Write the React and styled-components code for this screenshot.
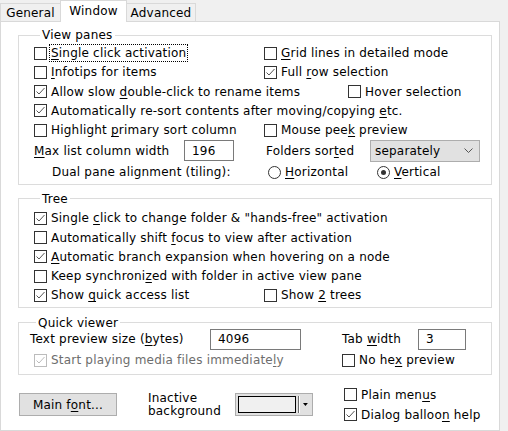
import React from "react";
import styled, { createGlobalStyle } from "styled-components";

const GlobalStyle = createGlobalStyle`
  html, body {
    margin: 0;
    padding: 0;
    background: #f0f0f0;
  }
  body {
    font-family: "DejaVu Sans", "Liberation Sans", sans-serif;
    font-size: 12px;
    line-height: 14px;
    letter-spacing: 0.2px;
    color: #000;
  }
  u {
    text-decoration-thickness: 1px;
    text-underline-offset: 2px;
  }
`;

const Dialog = styled.div`
  width: 508px;
  height: 431px;
  overflow: hidden;
`;

const TabStrip = styled.div`
  display: flex;
  align-items: flex-end;
  height: 22px;
  margin-bottom: -1px;
  position: relative;
  z-index: 1;
`;

const Tab = styled.div`
  box-sizing: border-box;
  width: ${(p) => p.$w}px;
  height: ${(p) => (p.$active ? 22 : 18)}px;
  margin-bottom: ${(p) => (p.$active ? 0 : 1)}px;
  margin-left: ${(p) => (p.$first ? 0 : -1)}px;
  padding-top: ${(p) => (p.$active ? 3 : 2)}px;
  border: 1px solid #d9d9d9;
  border-bottom: none;
  background: ${(p) => (p.$active ? "#fff" : "#f0f0f0")};
  text-align: center;
`;

const Panel = styled.div`
  box-sizing: border-box;
  width: 500px;
  height: 410px;
  border: 1px solid #d9d9d9;
  background: #fff;
  padding: 6px 7px 0 17px;
  display: flex;
  flex-direction: column;
`;

const Group = styled.fieldset`
  margin: ${(p) => p.$mt || 0}px 0 0;
  padding: ${(p) => p.$pt || 0}px 0 ${(p) => p.$pb || 0}px ${(p) => p.$pl || 15}px;
  border: 1px solid #dcdcdc;
  min-inline-size: 0;
`;

const Legend = styled.legend`
  margin-left: 6px;
  padding: 0 2px;
  line-height: 14px;
`;

const Row = styled.div`
  display: grid;
  grid-template-columns: ${(p) => p.$cols || "1fr"};
  align-items: center;
  height: ${(p) => p.$h || 19.25}px;
  margin-top: ${(p) => p.$mt || 0}px;
  padding-left: ${(p) => p.$indent || 0}px;
`;

const CheckLabel = styled.label`
  display: flex;
  align-items: center;
  white-space: nowrap;
  color: ${(p) => (p.$disabled ? "#6d6d6d" : "#000")};
`;

const Box = styled.span`
  box-sizing: border-box;
  flex: 0 0 13px;
  width: 13px;
  height: 13px;
  margin-right: 4px;
  border: 1px solid ${(p) => (p.$disabled ? "#bcbcbc" : "#333")};
  background: #fff;
  display: flex;
  align-items: center;
  justify-content: center;
`;

const Round = styled(Box)`
  border-radius: 50%;
`;

const Dot = styled.span`
  width: 5px;
  height: 5px;
  border-radius: 50%;
  background: #333;
`;

const Caption = styled.span`
  outline: ${(p) => (p.$focus ? "1px dotted #000" : "none")};
  outline-offset: 1px;
`;

const Text = styled.span`
  white-space: nowrap;
`;

const TextBox = styled.div`
  box-sizing: border-box;
  width: ${(p) => p.$w}px;
  height: 21px;
  border: 1px solid #7a7a7a;
  background: #fff;
  padding: 0 0 0 7px;
  display: flex;
  align-items: center;
`;

const Select = styled.div`
  box-sizing: border-box;
  width: 110px;
  height: 22px;
  border: 1px solid #adadad;
  background: #e1e1e1;
  padding: 0 6px 0 4px;
  display: flex;
  align-items: center;
  justify-content: space-between;
`;

const Bottom = styled.div`
  display: flex;
  align-items: center;
  height: 40px;
  margin-top: 10px;
  padding-left: 1px;
`;

const Button = styled.div`
  box-sizing: border-box;
  width: 98px;
  height: 23px;
  border: 1px solid #adadad;
  background: #e1e1e1;
  display: flex;
  align-items: center;
  justify-content: center;
`;

const TwoLine = styled.div`
  width: 87px;
  margin-left: 31px;
  line-height: 13px;
`;

const ColorCombo = styled.div`
  box-sizing: border-box;
  width: 78px;
  height: 23px;
  border: 1px solid #adadad;
  background: #e1e1e1;
  display: flex;
  align-items: center;
  padding: 0 4px 0 2px;
`;

const Swatch = styled.div`
  box-sizing: border-box;
  width: 60px;
  height: 17px;
  border: 1px solid #000;
  background: #f0f0f0;
`;

const Splitter = styled.div`
  width: 1px;
  height: 17px;
  margin: 0 4px 0 2px;
  background: #6d6d6d;
  box-shadow: 1px 0 0 #fff;
`;

const CheckColumn = styled.div`
  margin-left: 31px;
  display: flex;
  flex-direction: column;
`;

const Tick = ({ color }) => (
  <svg width="11" height="11" viewBox="0 0 11 11">
    <path d="M1.5 5.5 L4 8 L9.5 2" fill="none" stroke={color} strokeWidth="1" />
  </svg>
);

const Check = ({ checked, disabled, focus, children }) => (
  <CheckLabel $disabled={disabled}>
    <Box $disabled={disabled}>
      {checked && <Tick color={disabled ? "#bcbcbc" : "#555"} />}
    </Box>
    <Caption $focus={focus}>{children}</Caption>
  </CheckLabel>
);

const Radio = ({ checked, children }) => (
  <CheckLabel>
    <Round>{checked && <Dot />}</Round>
    <span>{children}</span>
  </CheckLabel>
);

const Chevron = () => (
  <svg width="9" height="6" viewBox="0 0 9 6">
    <path d="M0.5 0.5 L4.5 4.5 L8.5 0.5" fill="none" stroke="#555" strokeWidth="1" />
  </svg>
);

const Arrow = () => (
  <svg width="5" height="3" viewBox="0 0 5 3">
    <path d="M0 0 H5 L2.5 3 Z" fill="#000" />
  </svg>
);

export default function App() {
  return (
    <Dialog>
      <GlobalStyle />
      <TabStrip>
        <Tab $first $w={61}>General</Tab>
        <Tab $active $w={67}>Window</Tab>
        <Tab $w={70}>Advanced</Tab>
      </TabStrip>
      <Panel>
        <Group $pt={1.5}>
          <Legend>View panes</Legend>
          <Row $cols="230px 1fr">
            <Check focus><u>S</u>ingle click activation</Check>
            <Check><u>G</u>rid lines in detailed mode</Check>
          </Row>
          <Row $cols="230px 1fr">
            <Check><u>I</u>nfotips for items</Check>
            <Check checked>Full <u>r</u>ow selection</Check>
          </Row>
          <Row $cols="314px 1fr">
            <Check checked>Allow slow <u>d</u>ouble-click to rename items</Check>
            <Check>Hover selection</Check>
          </Row>
          <Row>
            <Check checked>Automatically re-sort contents after moving/copying <u>e</u>tc.</Check>
          </Row>
          <Row $cols="230px 1fr">
            <Check>Highlight <u>p</u>rimary sort column</Check>
            <Check>Mouse pee<u>k</u> preview</Check>
          </Row>
          <Row $cols="150px 82px 104px 110px" $h={21}>
            <Text><u>M</u>ax list column width</Text>
            <TextBox $w={50}>196</TextBox>
            <Text>Folders sor<u>t</u>ed</Text>
            <Select>
              <span>separately</span>
              <Chevron />
            </Select>
          </Row>
          <Row $cols="216px 109px 1fr" $indent={18} $h={23}>
            <Text>Dual pane alignment (tiling):</Text>
            <Radio><u>H</u>orizontal</Radio>
            <Radio checked><u>V</u>ertical</Radio>
          </Row>
        </Group>

        <Group $mt={7} $pt={3} $pb={1.5}>
          <Legend>Tree</Legend>
          <Row>
            <Check checked>Single <u>c</u>lick to change folder &amp; "hands-free" activation</Check>
          </Row>
          <Row>
            <Check>Automatically shift <u>f</u>ocus to view after activation</Check>
          </Row>
          <Row>
            <Check checked><u>A</u>utomatic branch expansion when hovering on a node</Check>
          </Row>
          <Row>
            <Check>Keep synchroni<u>z</u>ed with folder in active view pane</Check>
          </Row>
          <Row $cols="230px 1fr">
            <Check checked>Show <u>q</u>uick access list</Check>
            <Check>Show <u>2</u> trees</Check>
          </Row>
        </Group>

        <Group $mt={8} $pb={3} $pl={11}>
          <Legend>Quick viewer</Legend>
          <Row $cols="180px 132px 76px 48px" $h={21} $mt={-1}>
            <Text>Text preview size (<u>b</u>ytes)</Text>
            <TextBox $w={91}>4096</TextBox>
            <Text>Tab <u>w</u>idth</Text>
            <TextBox $w={48}>3</TextBox>
          </Row>
          <Row $cols="308px 1fr" $indent={4} $h={21}>
            <Check checked disabled>Start playing media files immediate<u>l</u>y</Check>
            <Check>No he<u>x</u> preview</Check>
          </Row>
        </Group>

        <Bottom>
          <Button>Main f<u>o</u>nt...</Button>
          <TwoLine>Inactive<br />background</TwoLine>
          <ColorCombo>
            <Swatch />
            <Splitter />
            <Arrow />
          </ColorCombo>
          <CheckColumn>
            <Row $h={20}>
              <Check>Plain men<u>u</u>s</Check>
            </Row>
            <Row $h={20}>
              <Check checked>Dialog balloo<u>n</u> help</Check>
            </Row>
          </CheckColumn>
        </Bottom>
      </Panel>
    </Dialog>
  );
}
